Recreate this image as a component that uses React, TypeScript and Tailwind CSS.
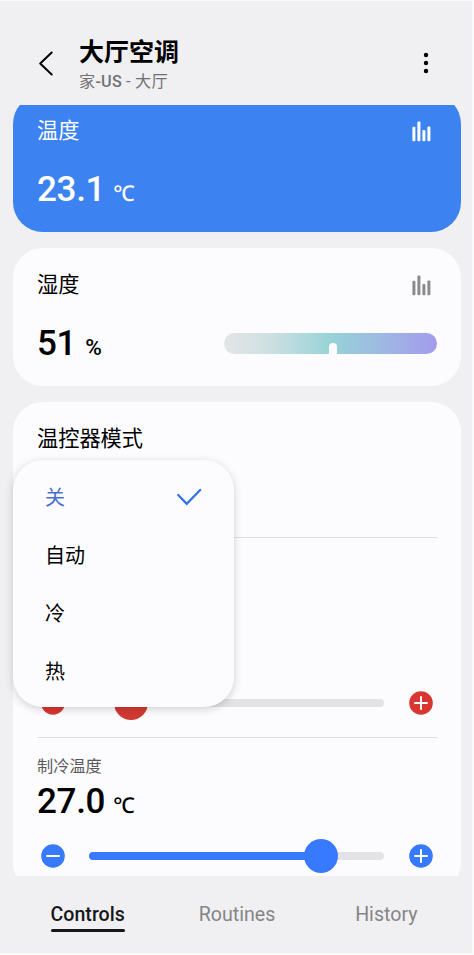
import { useState } from "react"

const modes = ["关", "自动", "冷", "热"]
const tabs = ["Controls", "Routines", "History"]

function BarsIcon({ className }: { className: string }) {
  return (
    <svg width="20" height="21" viewBox="0 0 20 21" className={className} fill="currentColor">
      <rect x="0.4" y="5.7" width="3" height="14.5" rx="1" />
      <rect x="5.4" y="0.4" width="3" height="19.8" rx="1" />
      <rect x="10.4" y="9.1" width="3" height="11.1" rx="1" />
      <rect x="15.4" y="5.4" width="3" height="14.8" rx="1" />
    </svg>
  )
}

function RoundButton({ color, plus }: { color: string; plus?: boolean }) {
  return (
    <button className="shrink-0">
      <svg width="24" height="24" viewBox="0 0 24 24" className={`block ${color}`}>
        <circle cx="12" cy="12" r="11.8" fill="currentColor" />
        <path d={plus ? "M6 12H18M12 6V18" : "M6 12H18"} stroke="white" strokeWidth="2" strokeLinecap="round" />
      </svg>
    </button>
  )
}

function Slider({ percent, text, fill }: { percent: number; text: string; fill: string }) {
  return (
    <div className="flex items-center justify-between h-[34px] pl-[3.5px] pr-1">
      <RoundButton color={text} />
      <div className="relative w-[295px] h-2 rounded-full bg-[#e3e3e5]">
        <div className={`h-2 rounded-full ${fill}`} style={{ width: `${percent}%` }} />
        <div
          className={`absolute top-1/2 size-[34px] -translate-x-1/2 -translate-y-1/2 rounded-full ${fill}`}
          style={{ left: `${percent}%` }}
        />
      </div>
      <RoundButton color={text} plus />
    </div>
  )
}

function Reading({ value, unit }: { value: string; unit: string }) {
  return (
    <p className="flex h-9 items-baseline font-medium leading-9">
      <span className="text-[35px] tracking-[-0.3px]">{value}</span>
      {unit === "℃" ? (
        <span className="ml-2 font-['Noto_Sans'] text-[21.5px] leading-8 font-medium">{unit}</span>
      ) : (
        <span className="ml-[9px] text-[22.5px]">{unit}</span>
      )}
    </p>
  )
}

export default function App() {
  const [mode, setMode] = useState("关")
  const [tab, setTab] = useState("Controls")

  return (
    <div className="w-[474px] h-[955px] bg-[#fafafb] pt-px pr-[2px] pb-[2px] overflow-hidden font-[Roboto,'Noto_Sans_CJK_SC',sans-serif] text-black">
      <div className="flex h-full flex-col bg-[#f0f0f2]">
        <header className="flex h-[104px] shrink-0 pl-[37px] pr-[38px]">
          <button className="mt-[50px] h-6">
            <svg width="18" height="26" viewBox="0 0 18 26" fill="none" stroke="currentColor" strokeWidth="2" strokeLinecap="round" strokeLinejoin="round">
              <path d="M14.7 1.5L3.2 12.5L14.7 23.5" />
            </svg>
          </button>
          <div className="ml-6 mt-9 flex-1">
            <h1 className="text-[25px] leading-[32px] font-bold">大厅空调</h1>
            <p className="mt-[2px] text-[16.2px] leading-[22px] font-medium tracking-[0.2px] text-[#717173]">
              <span className="font-normal">家</span>-US <span className="font-normal">- 大厅</span>
            </p>
          </div>
          <button className="mt-[51px] h-[22px]">
            <svg width="16" height="22" viewBox="0 0 16 22" fill="currentColor">
              <circle cx="8" cy="3" r="2.2" />
              <circle cx="8" cy="11" r="2.2" />
              <circle cx="8" cy="19" r="2.2" />
            </svg>
          </button>
        </header>

        <main className="h-[771px] shrink-0 overflow-hidden pl-[13px] pr-[11px]">
          <div className="-mt-[11px] flex flex-col gap-4">
            <section className="h-[138px] rounded-[30px] bg-[#3c82f1] px-6 pt-5 text-white">
              <div className="flex justify-between">
                <h2 className="mt-px text-[21.2px] leading-8">温度</h2>
                <BarsIcon className="mt-[7px] mr-[5px]" />
              </div>
              <div className="mt-[25px]">
                <Reading value="23.1" unit="℃" />
              </div>
            </section>

            <section className="h-[138px] rounded-[30px] bg-[#fcfcfe] px-6 pt-5">
              <div className="flex justify-between">
                <h2 className="mt-px text-[21.2px] leading-8">湿度</h2>
                <BarsIcon className="mt-[7px] mr-[5px] text-[#8b8b8d]" />
              </div>
              <div className="mt-[25px] flex items-start justify-between">
                <Reading value="51" unit="%" />
                <div className="mt-[7px] flex h-[21px] w-[213px] items-end rounded-full bg-[linear-gradient(90deg,#e3e5e6_0%,#cde0e1_22%,#97d3d7_50%,#9dbbe2_72%,#a49bec_100%)] pl-[105px]">
                  <div className="h-[11px] w-2 rounded-t-full bg-[#fcfcfe]" />
                </div>
              </div>
            </section>

            <section className="h-[491px] rounded-[30px] bg-[#fcfcfe] px-6 pt-[21px]">
              <div className="relative h-[114px]">
                <h2 className="text-[21.2px] leading-8">温控器模式</h2>
                <ul className="absolute -left-6 top-[37px] z-10 h-[247px] w-[221px] rounded-[30px] bg-[#fcfcfe] pt-[9px] shadow-[0_2px_9px_rgba(0,0,0,0.18)]">
                  {modes.map((m) => (
                    <li
                      key={m}
                      onClick={() => setMode(m)}
                      className={`flex h-[58px] items-center justify-between pl-8 pr-8 text-[20px] ${m === mode ? "text-[#4670cf]" : ""}`}
                    >
                      {m}
                      {m === mode && (
                        <svg width="26" height="20" viewBox="0 0 26 20" fill="none" stroke="#3472e8" strokeWidth="2.3" strokeLinecap="round">
                          <path d="M2.2 7L10.7 15.8L24.2 2" />
                        </svg>
                      )}
                    </li>
                  ))}
                </ul>
              </div>
              <div className="h-[200px] border-t border-[#dedee0] pt-[148px]">
                <Slider percent={14.3} text="text-[#d93632]" fill="bg-[#d13a33]" />
              </div>
              <div className="border-t border-[#dedee0] pt-[17px]">
                <h3 className="text-[16.2px] leading-6 text-[#59595b]">制冷温度</h3>
                <div className="mt-[5px] mb-[18.5px]">
                  <Reading value="27.0" unit="℃" />
                </div>
                <Slider percent={78.5} text="text-[#387aff]" fill="bg-[#387aff]" />
              </div>
            </section>
          </div>
        </main>

        <nav className="grid flex-1 grid-cols-3 items-start justify-items-center pl-[13px] pr-[11px] pt-[25px] text-[19.6px] leading-7">
          {tabs.map((t) => (
            <button
              key={t}
              onClick={() => setTab(t)}
              className={t === tab ? "font-medium text-[#171719]" : "text-[#858587]"}
            >
              {t}
              {t === tab && <div className="h-[3px] rounded-full bg-[#171719]" />}
            </button>
          ))}
        </nav>
      </div>
    </div>
  )
}
